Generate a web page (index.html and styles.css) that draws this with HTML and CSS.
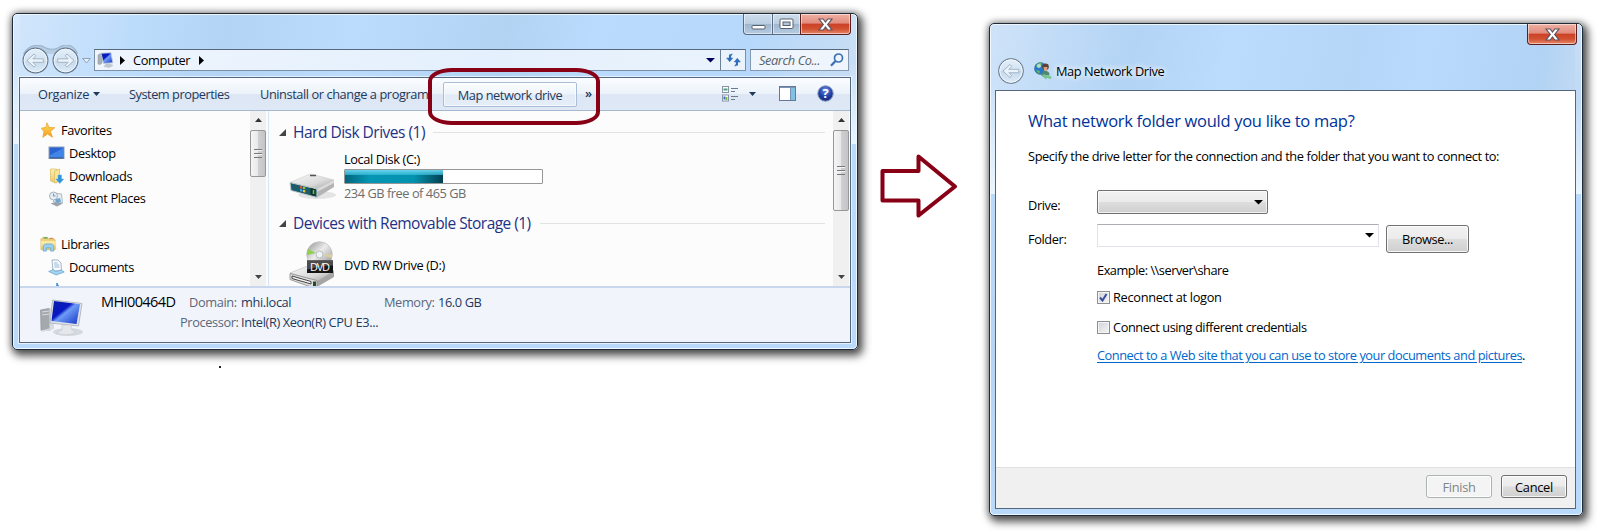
FILE: index.html
```html
<!DOCTYPE html>
<html lang="en">
<head>
<meta charset="utf-8">
<title>Map network drive</title>
<link rel="stylesheet" href="styles.css">
</head>
<body>
<svg width="0" height="0" class="defs" aria-hidden="true">
  <defs>
    <linearGradient id="orb" x1="0" y1="0" x2="0" y2="1"><stop offset="0" stop-color="#e3effa"/><stop offset=".5" stop-color="#d3e3f2"/><stop offset=".52" stop-color="#c6d9ec"/><stop offset="1" stop-color="#dcebf8"/></linearGradient>
    <linearGradient id="screen" x1="0" y1="0" x2="1" y2="1"><stop offset="0" stop-color="#0a1fa8"/><stop offset=".4" stop-color="#0818c4"/><stop offset=".5" stop-color="#6e9cf5"/><stop offset="1" stop-color="#1230c8"/></linearGradient>
    <linearGradient id="metal" x1="0" y1="0" x2="1" y2="1"><stop offset="0" stop-color="#fafafa"/><stop offset=".6" stop-color="#dadada"/><stop offset="1" stop-color="#9d9d9d"/></linearGradient>
    <linearGradient id="disc" x1="0" y1="0" x2="1" y2="1"><stop offset="0" stop-color="#8f8f8f"/><stop offset=".45" stop-color="#ececec"/><stop offset="1" stop-color="#8a8a8a"/></linearGradient>
    <linearGradient id="folder" x1="0" y1="0" x2="0" y2="1"><stop offset="0" stop-color="#fdf0b4"/><stop offset="1" stop-color="#e9c866"/></linearGradient>
    <linearGradient id="star" x1="0" y1="0" x2="0" y2="1"><stop offset="0" stop-color="#ffe15a"/><stop offset="1" stop-color="#f39a1d"/></linearGradient>
    <radialGradient id="help" cx=".5" cy=".3" r=".7"><stop offset="0" stop-color="#6f8fe0"/><stop offset=".6" stop-color="#1f3fa8"/><stop offset="1" stop-color="#152a78"/></radialGradient>
    <g id="x"><path d="M0 0h4.2l2.3 3L8.800 0H13L8.700 5.500 13 11H8.800L6.500 8 4.200 11H0l4.300-5.500z" fill="#fff" stroke="#5d5560" stroke-width="1.200"/></g>
  </defs>
</svg>

<main class="scene">
  <div class="left">
    <section class="window explorer">
      <header class="titlebar">
        <div class="caption">
          <span class="cap min"><svg width="15" height="5"><rect x="1" y=".5" width="13" height="3.500" rx="1" fill="#fff" stroke="#58626e"/></svg></span>
          <span class="cap max"><svg width="15" height="12"><rect x="1" y="1" width="13" height="9.500" rx="1" fill="#fff" stroke="#58626e"/><rect x="4" y="4" width="7" height="3.500" fill="#b4c7da" stroke="#58626e"/></svg></span>
          <span class="cap close"><svg width="15" height="13" viewBox="-1 -1 15 13"><use href="#x"/></svg></span>
        </div>
        <div class="nav">
          <svg class="orbs" width="70" height="30" viewBox="0 0 70 30">
            <path d="M2.500 9C8-1 19-1 24 2.500c4 2.500 10 2.500 14 0 6-4 14-4 18.500 6" fill="#b5cce3" stroke="#9db6cf" stroke-width="1.200"/>
            <circle cx="14.500" cy="15.500" r="12.400" fill="url(#orb)" stroke="#66788c" stroke-width="1.200"/>
            <circle cx="44.500" cy="15.500" r="12.400" fill="url(#orb)" stroke="#66788c" stroke-width="1.200"/>
            <circle cx="14.500" cy="15.500" r="11.300" fill="none" stroke="#eef6fd"/>
            <circle cx="44.500" cy="15.500" r="11.300" fill="none" stroke="#eef6fd"/>
            <path d="M6 15.500l7-6.500 1.800 1.800-3 3h10.500v3.500H11.800l3 3-1.800 1.800z" fill="#eaf2fa" stroke="#a3b4c6"/>
            <path d="M53 15.500l-7-6.500-1.800 1.800 3 3H36.700v3.500h10.500l-3 3 1.800 1.800z" fill="#eaf2fa" stroke="#a3b4c6"/>
          </svg>
          <svg class="history" width="9" height="8"><path d="M.7 1.500h7.600L4.500 6z" fill="#e6f1fb" stroke="#8ba3bd"/></svg>
          <div class="address">
            <svg class="pc" width="17" height="17" viewBox="0 0 17 17"><path d="M1 3l2.500-1.500 1.500.5v9l-2 1.500-2-.5z" fill="#a9b0b8" stroke="#8a939c" stroke-width=".5"/><path d="M4 1.200L14 .8l1.800 10-9.300.7z" fill="url(#screen)" stroke="#c3ccd6" stroke-width=".9"/><path d="M9 12h4l3 1.500-4 2-5-1z" fill="#c4c9cf" stroke="#a9b0b7" stroke-width=".4"/></svg>
            <svg class="crumb" width="5" height="9"><path d="M0 0l5 4.500-5 4.500z"/></svg>
            <span class="place">Computer</span>
            <svg class="crumb second" width="5" height="9"><path d="M0 0l5 4.500-5 4.500z"/></svg>
            <svg class="drop" width="9" height="5"><path d="M0 0h9L4.500 4.500z" fill="#000060"/></svg>
            <span class="refresh"><svg width="15" height="14" viewBox="0 0 15 14"><path d="M6.500 1C4 1 3.700 2.500 3.700 5.500M.7 5h6L3.700 8.700z" fill="#2d6dba" stroke="#2d6dba" stroke-width=".6"/><path d="M4 6V1.500" stroke="#2d6dba" stroke-width="2"/><path d="M8.500 13c2.500 0 2.800-1.500 2.800-4.500M8.300 9h6l-3-3.700z" fill="#2d6dba" stroke="#2d6dba" stroke-width=".6"/><path d="M11 8v4.500" stroke="#2d6dba" stroke-width="2"/></svg></span>
          </div>
          <div class="search"><em>Search Co...</em><svg width="14" height="14" viewBox="0 0 14 14"><circle cx="8.500" cy="5" r="4" fill="#eef6fd" stroke="#3e6fb4" stroke-width="1.700"/><path d="M5.500 8L1 12.800" stroke="#3e6fb4" stroke-width="2.200"/></svg></div>
        </div>
      </header>

      <div class="client">
        <div class="toolbar">
          <span class="organize">Organize</span><svg width="7" height="4"><path d="M0 0h7L3.500 4z" fill="#1e395b"/></svg>
          <span class="sysprops">System properties</span>
          <span class="uninstall">Uninstall or change a program</span>
          <span class="mapbtn">Map network drive</span>
          <span class="more">»</span>
          <svg class="views" width="17" height="16" viewBox="0 0 17 16"><rect x=".5" y=".5" width="6" height="6" fill="#fff" stroke="#8796a7"/><path d="M1.500 3.500h4" stroke="#49a07a" stroke-width="2"/><rect x=".5" y="9" width="6" height="6" fill="#fff" stroke="#8796a7"/><path d="M1.500 12h2" stroke="#3c66c4" stroke-width="3"/><path d="M3.500 12.500h2" stroke="#7aba42" stroke-width="3"/><path d="M9 2.500h7M9 5.500h4M9 10.500h7M9 13.500h4" stroke="#6b7c90"/></svg>
          <svg class="vdrop" width="7" height="4"><path d="M0 0h7L3.500 4z" fill="#1e395b"/></svg>
          <svg class="preview" width="17" height="15"><rect x=".5" y=".5" width="16" height="14" fill="#fff" stroke="#63799b"/><rect x="11.500" y="1" width="4.500" height="13" fill="#7fc1e2"/><path d="M1 1.500h15M11.500 1v13" stroke="#7d93b3"/></svg>
          <svg class="help" width="17" height="17"><circle cx="8.500" cy="8.500" r="7.700" fill="url(#help)" stroke="#8795b8"/><text x="8.500" y="13.300" text-anchor="middle" font-size="13">?</text></svg>
        </div>

        <div class="panes">
          <nav class="tree">
            <div class="row top"><svg width="16" height="16" viewBox="0 0 16 16"><path d="M6.500.8l2 4.700 5.800.2-4.400 3.800 2.100 5.700-5-3.200-4.700 3.300 1.200-5.600L.8 6.200l4.700-.8z" fill="url(#star)" stroke="#eda83a" stroke-width=".9"/></svg><span>Favorites</span></div>
            <div class="row"><svg width="16" height="14" viewBox="0 0 16 14"><rect x=".5" y="1" width="15" height="11.500" fill="#2a63d4" stroke="#8fa0b8"/><path d="M1 9.500L15 2v10H1z" fill="#4f94ee" opacity=".7"/><path d="M1 12h14" stroke="#334c80"/></svg><span>Desktop</span></div>
            <div class="row"><svg width="16" height="16" viewBox="0 0 16 16"><path d="M2 1h6v14l-6-2z" fill="url(#folder)" stroke="#d9b95e" stroke-width=".7"/><path d="M6 3l5-2v12l-5 2z" fill="#f9e49c" stroke="#d9b95e" stroke-width=".7"/><path d="M9.500 7h3.500v4h2.300l-4 4.500-4-4.500h2.200z" fill="#2f93dd" stroke="#5cb0ea" stroke-width=".5"/></svg><span>Downloads</span></div>
            <div class="row"><svg width="16" height="16" viewBox="0 0 16 16"><path d="M5 2l8 1 1 9-9-1z" fill="#e6edf3" stroke="#97a5b2" stroke-width=".7"/><circle cx="5" cy="5" r="4" fill="#e4edf4" stroke="#98a5b0" stroke-width=".8"/><path d="M5 2.500V5h2" fill="none" stroke="#5b6b7a" stroke-width=".7"/><path d="M6.500 8.500l5-1.500 1 4-5 .5z" fill="#69a6d6"/><path d="M2 12.500l5-1.500 7.500 1.500-6 3z" fill="#9aa3ab"/></svg><span>Recent Places</span></div>
            <div class="row top lib"><svg width="18" height="17" viewBox="0 0 18 17"><path d="M1 3l2-2h4l1 1.500h6l2 1V14H1z" fill="#eed27c" stroke="#d0ad50" stroke-width=".7"/><path d="M4 1.500h4" stroke="#5da553" stroke-width="1.500"/><path d="M10 2h4" stroke="#d8734c"/><path d="M1 5h16v8.500H1z" fill="url(#folder)"/><path d="M3.500 15.500V10l2-2h7l2 2v5.500h-3.200V12H6.700v3.500z" fill="#9ad0f0" stroke="#579fd0" stroke-width=".7"/></svg><span>Libraries</span></div>
            <div class="row"><svg width="17" height="17" viewBox="0 0 17 17"><path d="M4 1h6l3 3 .5 8H5z" fill="#f8fbfe" stroke="#8da4bb" stroke-width=".8"/><path d="M6 4h3.500M6.200 6h5M6.400 8h5" stroke="#7fa6ce" stroke-width=".8"/><path d="M.7 12.500l5-2 1.500 2 6-1.500 3 2-8 3z" fill="#a4d3ef" stroke="#5d9fcc" stroke-width=".7"/></svg><span>Documents</span></div>
            <div class="row"><svg width="16" height="16" viewBox="0 0 16 16"><path d="M8.500 1l4 5.500h-4z" fill="#3a8bd0"/><path d="M8.500 1v11" stroke="#3a8bd0" stroke-width="1.500"/></svg><span>Music</span></div>
          </nav>
          <div class="scroll s1"><svg width="7" height="4"><path d="M0 4h7L3.500 0z" fill="#333"/></svg><div class="thumb"><i></i></div><svg class="dn" width="7" height="4"><path d="M0 0h7L3.500 4z" fill="#444"/></svg></div>
          <div class="content">
            <h2 class="group"><svg width="7" height="7"><path d="M7 0v7H0z" fill="#444"/></svg><span class="g1">Hard Disk Drives (1)</span><hr></h2>
            <div class="drive">
              <svg width="48" height="28" viewBox="0 0 48 28"><ellipse cx="28" cy="22" rx="19" ry="4" fill="#e4e4e4"/><path d="M1 9.500L20 1.500c1-.5 3-.5 4 0L45 7 28 16z" fill="url(#metal)" stroke="#c4c4c4" stroke-width=".5"/><path d="M21 2.500h6" stroke="#555" stroke-width="1.500"/><path d="M45 7v7L28 24.500V16z" fill="#b4b4b4"/><path d="M45 7v3L28 19v-3z" fill="#dadada"/><path d="M1 9.500L28 16v8.500L2 17.500z" fill="#1d5c6c" stroke="#c2caca" stroke-width="1"/><path d="M21.500 15l5 1.200v6.800l-5-1.300z" fill="#143326"/><path d="M24.500 17v4" stroke="#5fd05f" stroke-width="1.500"/><path d="M11 13l2.300.5v2.300l-2.300-.5z" fill="#e8582c"/><path d="M14 13.500l2.300.5v2.300l-2.300-.5z" fill="#8dc63f"/><path d="M11 16l2.300.5v2.300l-2.300-.5z" fill="#4aa3df"/><path d="M14 16.700l2.300.5v2.300l-2.300-.5z" fill="#f7c52b"/></svg>
              <div class="info"><span class="name">Local Disk (C:)</span><div class="meter"><div style="width:49.7%"></div></div><span class="free">234 GB free of 465 GB</span></div>
            </div>
            <h2 class="group two"><svg width="7" height="7"><path d="M7 0v7H0z" fill="#444"/></svg><span class="g2">Devices with Removable Storage (1)</span><hr></h2>
            <div class="drive dvd">
              <svg width="48" height="46" viewBox="0 0 48 46"><path d="M1 32l20-8 24 6-17 10z" fill="url(#metal)" stroke="#bbb" stroke-width=".6"/><path d="M28 40l17-10v6L28 46z" fill="#a5a5a5"/><path d="M1 32.500l27 7V46h-6L1 38.500z" fill="#dedede" stroke="#888" stroke-width=".8"/><path d="M3 35l19 5.500V43L3 37.500z" fill="#f4f4f4" stroke="#333" stroke-width=".9"/><path d="M25.500 40.500v5" stroke="#254a25" stroke-width="3"/><circle cx="30.500" cy="13.500" r="12.800" fill="url(#disc)" stroke="#b5b5b5" stroke-width=".6"/><path d="M19 8l8 4-9 2c-.4-2 .4-4 1-6z" fill="#8fd052"/><path d="M43 17l-9-2.500 9-1.500z" fill="#d9cf9a"/><circle cx="30.500" cy="13.500" r="3.500" fill="#eef3f7" stroke="#bbb"/><rect x="18" y="19.500" width="26" height="12.500" fill="#161616"/><path d="M18 19.500h26v5c-9 0-17 2-26 4z" fill="#4d4d4d"/><text x="31" y="29.800" text-anchor="middle" font-size="11" textLength="20">DVD</text></svg>
              <span class="name">DVD RW Drive (D:)</span>
            </div>
          </div>
          <div class="scroll s2"><svg width="7" height="4"><path d="M0 4h7L3.500 0z" fill="#333"/></svg><div class="thumb"><i></i></div><svg class="dn" width="7" height="4"><path d="M0 0h7L3.500 4z" fill="#444"/></svg></div>
        </div>

        <footer class="details">
          <svg width="44" height="38" viewBox="0 0 44 38"><ellipse cx="28" cy="33" rx="15" ry="4" fill="#d4d9e1"/><path d="M.5 11l8-1.500 2 .5v21L1 31.500z" fill="#a4a9ae" stroke="#8a8f94" stroke-width=".6"/><path d="M2 13l7-1M2 16l7-1" stroke="#d8dce0"/><path d="M9.500 9.500L14 12v18L2 33l-1-1.500 8.500-2z" fill="#d9dcdf"/><path d="M12.500 1L42 4.500 38.500 27 10 24z" fill="#dfe3e8" stroke="#a6aeb7" stroke-width=".8"/><path d="M14 2L40 5.300 36.500 25 11.500 22z" fill="url(#screen)"/><path d="M22 26h9l1 5 4 2c-4 3-13 4-20 1l6-3z" fill="#e4e6e9" stroke="#c4c7ca" stroke-width=".6"/></svg>
          <div class="meta">
            <div class="line"><strong>MHI00464D</strong><label class="dom">Domain:</label><span class="v1">mhi.local</span><label class="mem">Memory:</label><span>16.0 GB</span></div>
            <div class="line p"><label class="proc">Processor:</label><span class="v2">Intel(R) Xeon(R) CPU E3...</span></div>
          </div>
        </footer>
      </div>
      <div class="highlight"></div>
    </section>
    <div class="dot"></div>
  </div>

  <svg class="arrow" width="82" height="68" viewBox="0 0 82 68"><path d="M4.500 18h36V3.500L77 33.500 40.500 62.500v-15h-36z" fill="none" stroke="#880015" stroke-width="4" stroke-linejoin="round"/></svg>

  <section class="window dialog">
    <header class="titlebar">
      <div class="caption"><span class="cap close"><svg width="15" height="13" viewBox="-1 -1 15 13"><use href="#x"/></svg></span></div>
      <div class="title">
        <svg width="28" height="28" viewBox="0 0 28 28"><circle cx="14" cy="14" r="13" fill="#a8bdd4"/><circle cx="14" cy="14" r="12.300" fill="url(#orb)" stroke="#66788c"/><circle cx="14" cy="14" r="11.200" fill="none" stroke="#f2f8fe"/><path d="M6 14l7-6.500L14.800 9.300l-3 3h10v3.500h-10l3 3L13 20.500z" fill="#eaf2fa" stroke="#a3b4c6"/></svg>
        <svg class="globe" width="18" height="18" viewBox="0 0 18 18"><circle cx="6.500" cy="6.500" r="6" fill="#2678c9" stroke="#3c6f9b" stroke-width=".6"/><path d="M2 4c1-3 5-4 6-3L7 4 4 6zM2 8l4 1-1 3z" fill="#69bd4d"/><circle cx="5" cy="4" r="2" fill="#d5efff" opacity=".7"/><circle cx="11.500" cy="4.800" r="3.300" fill="#5a4236"/><path d="M9.500 5h4l-.5 3.500-1.500 1-1.500-1z" fill="#dda07d"/><path d="M7.500 14c0-4 1.500-5 4-5s4 1.500 4 4z" fill="#4f8674"/><path d="M9 13l4 3M13 14l4 2" stroke="#75c38d" stroke-width="3"/></svg>
        <span>Map Network Drive</span>
      </div>
    </header>
    <div class="client">
      <div class="body">
        <h1>What network folder would you like to map?</h1>
        <p class="specify">Specify the drive letter for the connection and the folder that you want to connect to:</p>
        <div class="field f1"><span class="lbl l1">Drive:</span><div class="combo"><svg width="9" height="5"><path d="M0 0h9L4.500 4.500z"/></svg></div></div>
        <div class="field f2"><span class="lbl l2">Folder:</span><div class="combo edit"><svg width="9" height="5"><path d="M0 0h9L4.500 4.500z"/></svg></div><span class="btn browse">Browse...</span></div>
        <div class="indent example">Example: \\server\share</div>
        <div class="indent check c1"><i><svg width="9" height="9"><path d="M1 4.500l2.500 3L7.500 1" fill="none" stroke="#3a4f9c" stroke-width="2"/></svg></i><span>Reconnect at logon</span></div>
        <div class="indent check c2"><i></i><span>Connect using different credentials</span></div>
        <div class="indent link"><a>Connect to a Web site that you can use to store your documents and pictures</a>.</div>
      </div>
      <footer class="actions"><span class="btn off">Finish</span><span class="btn">Cancel</span></footer>
    </div>
  </section>
</main>
</body>
</html>
```
FILE: styles.css
```css
* { box-sizing: border-box; }
body {
  margin: 0;
  background: #fff;
  font-family: "Open Sans", "Noto Sans", sans-serif;
  font-size: 12.8px;
  letter-spacing: -0.39px;
  color: #000;
  white-space: nowrap;
}
svg { display: block; flex: none; }
span { flex: none; }
.defs { position: absolute; }
.scene { display: flex; align-items: flex-start; height: 531px; width: 1597px; overflow: hidden; padding: 13px 0 0 12px; }
.left { width: 846px; flex: none; }
.dot { width: 2px; height: 2px; background: #222; margin: 16px 0 0 207px; }

/* Glass window frame */
.window {
  flex: none;
  display: flex;
  flex-direction: column;
  position: relative;
  border: 1px solid #1f2b38;
  border-radius: 5px;
  padding: 0 6px 6px 5px;
  box-shadow: inset 0 0 0 1px #eef7ff, 3px 4px 9px 2px rgba(0,0,0,.62), 0 0 7px 1px rgba(0,0,0,.3);
}
.explorer {
  width: 846px; height: 337px; padding-left: 6px;
  background:
    linear-gradient(#d9eafc, #cfe5fb 35%, #eaf5ff 100%) left top / 7px 130px no-repeat,
    linear-gradient(#cfe2f6, #c6def6 35%, #eaf5ff 100%) right top / 7px 130px no-repeat,
    linear-gradient(#b9dafb, #b9dafb) 0 100% / 100% 207px no-repeat,
    linear-gradient(100deg, #d2e6fb 0, #bcdcfc 14%, #b3d4f5 24%, #bbdcfd 38%, #b3d3f3 55%, #badbfd 65%, #b6d8fb 82%, #c8ddf3 95%, #cfe0f2 100%);
}
.titlebar { display: flex; flex-direction: column; flex: none; }
.explorer .titlebar { height: 63px; margin-right: -1px; }
.caption { display: flex; justify-content: flex-end; height: 21px; padding-right: 1px; flex: none; }
.cap {
  height: 21px;
  display: flex; align-items: center; justify-content: center;
  border: 1px solid #596b80; border-top: 0; border-left-width: 0;
  background: linear-gradient(#cddded 0, #bccfe2 48%, #9fb5cb 50%, #b5cce2 100%);
  box-shadow: inset 0 0 0 1px rgba(255,255,255,.5);
}
.cap.min { width: 30px; border-left-width: 1px; border-radius: 0 0 0 4px; padding-top: 7px; }
.cap.max { width: 28px; }
.cap.close {
  width: 50px; border-color: #5d1f1c; border-radius: 0 0 4px 0;
  background: linear-gradient(#f0b0a3 0, #e18c7d 46%, #cb4127 50%, #d2512f 75%, #e7886f 100%);
}
.explorer .cap { margin-right: -1px; border-left-width: 1px; }
.explorer .cap.close { margin-right: 0; width: 51px; }
.explorer .cap.max { width: 29px; }
.nav { display: flex; height: 30px; margin-top: 10px; align-items: center; }
.orbs { margin-left: 2px; }
.history { margin: 1px 0 0 -9px; }
.address {
  display: flex; align-items: center;
  margin-left: 3px; width: 652px; height: 22px; margin-top: 0;
  background: linear-gradient(90deg, #eef5fd, #e4f0fd 60%, #eaf3fc);
  border: 1px solid #7b8fa6; border-top-color: #55687d;
  padding-left: 2px;
}
.crumb { margin-left: 6px; }
.place { margin-left: 9px; width: 56px; letter-spacing: -.38px; margin-top: -1px; }
.crumb.second { margin-left: 9px; }
.place { margin-left: 8px; width: 57px; }
.drop { margin-left: auto; }
.refresh { width: 25px; height: 20px; border-left: 1px solid #6b7f96; margin-left: 5px; display: flex; align-items: center; justify-content: center; }
.search {
  display: flex; align-items: center; justify-content: space-between;
  width: 99px; height: 22px; margin: 0 0 0 4px; padding: 0 4px 0 8px;
  background: #eef5fc; border: 1px solid #8599b0; border-top-color: #55687d;
  color: #596066;
}
.search em { letter-spacing: -.42px; }

.client { border: 1px solid #54677c; background: #fcfcfc; flex: 1; display: flex; flex-direction: column; min-height: 0; }
.explorer .client { box-shadow: 0 0 0 1px rgba(240,248,255,.8); }
.toolbar {
  height: 33px; flex: none; display: flex; align-items: center;
  color: #1e395b; padding-left: 18px;
  background: linear-gradient(#fafcff 0, #edf3fb 48%, #dce6f4 52%, #dfe9f6 100%);
  border-bottom: 1px solid #a5b8cf;
}
.toolbar > svg { margin-top: -1px; }
.organize { width: 55px; letter-spacing: -.3px; }
.sysprops { width: 101px; margin-left: 29px; letter-spacing: -.48px; }
.uninstall { width: 170px; margin-left: 30px; letter-spacing: -.43px; }
.mapbtn { width: 134px; height: 25px; margin: 1px 0 0 13px; border: 1px solid #a9bdd6; border-radius: 2px; display: flex; align-items: center; justify-content: center; background: linear-gradient(#fbfdff, #eef4fb 48%, #e1eaf6 52%, #e6eef8); box-shadow: inset 0 0 0 1px rgba(255,255,255,.6); letter-spacing: -.44px; }
.more { width: 10px; margin-left: 8px; font-weight: 600; margin-top: -2px; }
.views { margin-left: 127px; }
.vdrop { margin-left: 10px; }
.preview { margin-left: 23px; }
.help { margin-left: 21px; }
.help text, .dvd text { fill: #fff; font-weight: 700; }
.dvd text { font-weight: 400; letter-spacing: 0; }

.panes { height: 175px; flex: none; display: flex; }
.tree { width: 230px; padding-top: 8px; overflow: hidden; }
.row { height: 22.85px; display: flex; align-items: center; padding-left: 28px; }
.row > svg { width: 17px; margin-right: 4px; }
.row > span { margin-top: -1px; }
.row.top { padding-left: 20px; }
.scroll { width: 16px; background: #f0f0f0; display: flex; flex-direction: column; align-items: center; padding: 7px 0; flex: none; }
.row.lib { margin-top: 22.85px; }
.thumb { width: 16px; height: 47px; margin-top: 8px; border: 1px solid #979797; border-radius: 2px; background: linear-gradient(90deg, #f5f5f5, #e9e9eb 48%, #d0d0d3 52%, #c4c4c6); display: flex; align-items: center; justify-content: center; flex: none; }
.thumb i { width: 8px; height: 9px; background: repeating-linear-gradient(#777 0 1px, #f5f5f5 1px 2px, transparent 2px 4px); }
.s2 .thumb { height: 81px; }
.dn { margin-top: auto; }
.content { width: 565px; margin-left: 2px; padding-top: 10px; border-left: 1px solid #d6e5f5; overflow: hidden; }
.group { display: flex; align-items: center; margin: 0; height: 22px; padding: 0 8px 0 10px; font-size: 15.500px; font-weight: 400; color: #1e3287; }
.group span { margin-left: 7px; margin-top: -1px; }
.group hr { flex: 1; border: 0; height: 1px; background: #e2e2e2; margin: 0 0 0 9px; }
.g1 { width: 131px; letter-spacing: -.5px; }
.g2 { width: 238px; letter-spacing: -.54px; }
.drive { display: flex; padding-left: 20px; }
.drive > svg { margin-top: 30px; }
.info { margin-left: 7px; display: flex; flex-direction: column; padding-top: 7px; }
.info span { line-height: 18px; height: 18px; }
.meter { width: 199px; height: 15px; border: 1px solid #979797; border-radius: 1px; background: #fff; margin-top: 1px; }
.meter div { height: 13px; background: linear-gradient(rgba(110,215,240,.95) 0, rgba(60,190,220,.75) 35%, transparent 42%), linear-gradient(90deg, #02657d, #0496b4 25%, #0393b0 70%, #013f50); }
.free { color: #6d6d6d; letter-spacing: -.46px; }
.two { margin-top: 10px; }
.dvd { height: 53px; }
.dvd > svg { margin-top: 7px; }
.dvd .name { margin: 22px 0 0 7px; }

.details { flex: 1; background: #f1f5fb; border-top: 2px solid #c9d7ec; display: flex; padding: 11px 0 0 20px; }
.meta { margin: -7px 0 0 17px; color: #1e395b; }
.meta label { color: #5a6779; flex: none; }
.line { display: flex; align-items: center; height: 20px; }
.line strong { font-weight: 400; font-size: 14.500px; width: 88px; color: #000; letter-spacing: -.6px; margin-top: -2px; }
.dom { width: 52px; }
.v1 { width: 143px; }
.mem { width: 54px; }
.proc { margin-left: 79px; width: 61px; }
.v2 { letter-spacing: -.38px; }
.highlight { position: absolute; left: 415px; top: 54px; width: 172px; height: 57px; border: 4px solid #880015; border-radius: 24px / 13px; }

.arrow { margin: 140px 0 0 20px; }

/* Map Network Drive dialog */
.dialog {
  width: 594px; height: 493px; margin: 10px 0 0 29px;
  background:
    linear-gradient(#cfe3f8, #cbe2fa 35%, #eaf5ff 100%) left top / 7px 170px no-repeat,
    linear-gradient(#cadef4, #bfdaf5 45%, #eaf5ff 100%) right top / 7px 170px no-repeat,
    linear-gradient(#b9dafb, #b4d5f6 50%, #b9dafb) 0 100% / 100% 322px no-repeat,
    linear-gradient(100deg, #cfe3f8 0, #bcd9f7 14%, #b3d4f5 22%, #bbdcfd 36%, #b5d6f7 55%, #b9dafd 65%, #b2d3f4 82%, #c8ddf3 92%, #cfe0f2 100%);
}
.dialog .titlebar { height: 66px; margin-right: -1px; }
.dialog .cap.close { border-left-width: 1px; border-radius: 0 0 4px 4px; }
.dialog .caption { padding-right: 0; }
.title { display: flex; align-items: center; margin-top: 11px; height: 29px; padding-left: 2px; }
.title .globe { margin-left: 9px; }
.title > span { margin: 1px 0 0 4px; text-shadow: 0 0 6px #fff, 0 0 6px #fff; letter-spacing: -.42px; }
.dialog .client { background: #fff; }
.body { flex: 1; padding: 17px 0 0 32px; }
h1 { margin: 0; font-size: 16.500px; line-height: 26px; font-weight: 400; color: #003399; letter-spacing: -.29px; }
.specify { margin: 12px 0 0; line-height: 20px; }
.field { display: flex; }
.lbl { width: 69px; line-height: 20px; }
.f1 { margin-top: 24px; height: 24px; }
.l1 { margin-top: 5px; }
.f2 { margin-top: 10px; height: 30px; }
.l2 { margin-top: 5px; }
.combo { width: 171px; height: 24px; border: 1px solid #707070; border-radius: 2px; background: linear-gradient(#f2f2f2, #ebebeb 48%, #dddddd 52%, #cfcfcf); display: flex; align-items: center; justify-content: flex-end; padding-right: 4px; box-shadow: inset 0 0 0 1px rgba(255,255,255,.7); }
.combo.edit { width: 282px; height: 23px; background: #fff; border: 1px solid #e2e3ea; border-top-color: #abadb3; border-radius: 0; }
.btn { display: flex; align-items: center; justify-content: center; width: 66px; height: 23px; border: 1px solid #707070; border-radius: 3px; background: linear-gradient(#f2f2f2, #ebebeb 48%, #dddddd 52%, #cfcfcf); box-shadow: inset 0 0 0 1px rgba(255,255,255,.8); }
.browse { width: 83px; height: 28px; margin: 1px 0 0 7px; }
.indent { margin-left: 69px; line-height: 20px; }
.example { margin-top: 6px; letter-spacing: -.48px; }
.check { display: flex; align-items: center; }
.check i { width: 13px; height: 13px; border: 1px solid #8e8f8f; background: linear-gradient(135deg, #cfd3da, #f6f6f6); box-shadow: inset 0 0 0 1px #f4f4f4; display: flex; align-items: center; justify-content: center; margin-right: 3px; }
.c1 { margin-top: 7px; letter-spacing: -.31px; }
.c2 { margin-top: 10px; letter-spacing: -.43px; }
.link { margin-top: 8px; letter-spacing: -.46px; }
.link a { color: #0066cc; text-decoration: underline; text-underline-offset: 2px; }
.actions { height: 41px; flex: none; background: #f0f0f0; border-top: 1px solid #dfdfdf; display: flex; justify-content: flex-end; gap: 9px; padding: 7px 8px 0 0; letter-spacing: -.3px; }
.off { color: #838383; border-color: #adb2b5; background: #f4f4f4; }
```
